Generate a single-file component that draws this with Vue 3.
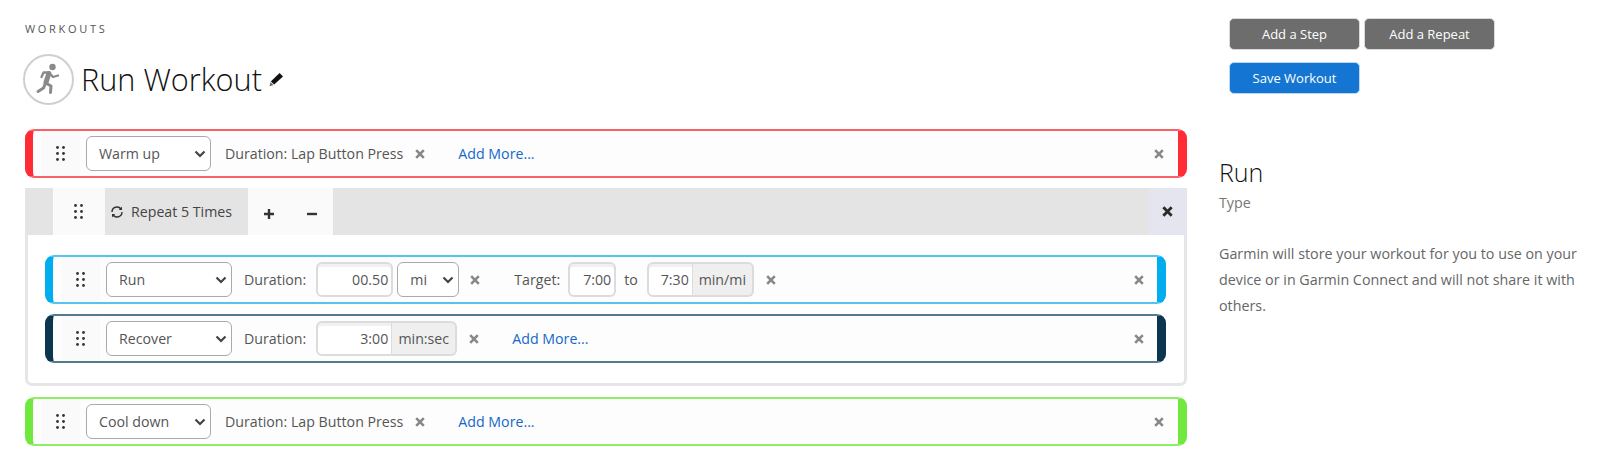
<script setup>
const dots = [[0, 0], [6, 0], [0, 6], [6, 6], [0, 12], [6, 12]]
</script>

<template>
  <div class="page">
    <main class="main">
      <div class="crumb">WORKOUTS</div>
      <div class="title-row">
        <div class="sport">
          <svg width="32" height="34" viewBox="0 0 32 34" fill="none" stroke="#8a8a8a" stroke-linecap="round" stroke-linejoin="round">
            <circle cx="19.5" cy="5" r="3.2" fill="#8a8a8a" stroke="none" />
            <path d="M15.8 11.5 L13 20.5" stroke-width="5" />
            <path d="M15 10.5 L10.5 10.5 L8.5 15" stroke-width="2.3" />
            <path d="M16 10.5 L20 15 L25 13.5" stroke-width="2.3" />
            <path d="M12.5 21 L18 24 L17.5 30.5" stroke-width="3" />
            <path d="M12.5 21 L10.5 26 L5 29.5" stroke-width="3" />
          </svg>
        </div>
        <h1 class="title">Run Workout</h1>
        <svg class="pencil" width="15" height="15" viewBox="0 0 15 15">
          <path d="M10.6 1 L14 4.4 L5.2 12.4 L1.8 9.4 Z" fill="#111" />
          <path d="M1.4 10.2 L4.5 13 L0.6 14.2 Z" fill="#666" />
        </svg>
      </div>

      <section class="step red">
        <div class="drag">
          <svg class="dots" width="10" height="16" viewBox="-1.5 -1.5 10 16"><circle v-for="d in dots" :key="d.join()" :cx="d[0]" :cy="d[1]" r="1.4" /></svg>
        </div>
        <label class="select s-first">
          <select><option>Warm up</option></select>
          <svg class="chev" width="12" height="8" viewBox="0 0 12 8"><path d="M1.5 1.5 L6 6 L10.5 1.5" /></svg>
        </label>
        <span class="text t-dur">Duration: Lap Button Press</span>
        <svg class="x x-a" width="10" height="10" viewBox="0 0 10 10"><path d="M1.2 1.2 L8.8 8.8 M8.8 1.2 L1.2 8.8" /></svg>
        <a class="more m-a">Add More...</a>
        <svg class="x x-end" width="10" height="10" viewBox="0 0 10 10"><path d="M1.2 1.2 L8.8 8.8 M8.8 1.2 L1.2 8.8" /></svg>
      </section>

      <section class="repeat">
        <header class="repeat-head">
          <div class="rh-drag">
            <svg class="dots" width="10" height="16" viewBox="-1.5 -1.5 10 16"><circle v-for="d in dots" :key="d.join()" :cx="d[0]" :cy="d[1]" r="1.4" /></svg>
          </div>
          <div class="rh-label">
            <svg width="14" height="14" viewBox="0 0 14 14" fill="none" stroke="#333" stroke-width="1.4">
              <path d="M2 7 A5 5 0 0 1 11 4" />
              <path d="M12 7 A5 5 0 0 1 3 10" />
              <path d="M12 1.6 L12 5 L8.8 5 Z" fill="#333" stroke="none" />
              <path d="M2 12.4 L2 9 L5.2 9 Z" fill="#333" stroke="none" />
            </svg>
            <span class="text">Repeat 5 Times</span>
          </div>
          <div class="rh-tools">
            <svg width="12" height="12" viewBox="0 0 12 12"><path d="M6 1 V11 M1 6 H11" stroke="#333" stroke-width="2.4" /></svg>
            <svg width="12" height="12" viewBox="0 0 12 12"><path d="M1 6 H11" stroke="#333" stroke-width="2.4" /></svg>
          </div>
          <div class="rh-fill"></div>
          <div class="rh-close">
            <svg width="11" height="11" viewBox="0 0 10 10"><path d="M1.2 1.2 L8.8 8.8 M8.8 1.2 L1.2 8.8" stroke="#2b2b2b" stroke-width="2.6" /></svg>
          </div>
        </header>

        <div class="repeat-body">
          <section class="step blue">
            <div class="drag">
              <svg class="dots" width="10" height="16" viewBox="-1.5 -1.5 10 16"><circle v-for="d in dots" :key="d.join()" :cx="d[0]" :cy="d[1]" r="1.4" /></svg>
            </div>
            <label class="select s-inner">
              <select><option>Run</option></select>
              <svg class="chev" width="12" height="8" viewBox="0 0 12 8"><path d="M1.5 1.5 L6 6 L10.5 1.5" /></svg>
            </label>
            <span class="text t-label">Duration:</span>
            <div class="input w-76">00.50</div>
            <label class="select s-unit">
              <select><option>mi</option></select>
              <svg class="chev" width="12" height="8" viewBox="0 0 12 8"><path d="M1.5 1.5 L6 6 L10.5 1.5" /></svg>
            </label>
            <svg class="x x-b" width="10" height="10" viewBox="0 0 10 10"><path d="M1.2 1.2 L8.8 8.8 M8.8 1.2 L1.2 8.8" /></svg>
            <span class="text t-target">Target:</span>
            <div class="input w-48">7:00</div>
            <span class="text t-to">to</span>
            <div class="group g-target">
              <div class="input in-group w-46">7:30</div>
              <span class="addon">min/mi</span>
            </div>
            <svg class="x x-c" width="10" height="10" viewBox="0 0 10 10"><path d="M1.2 1.2 L8.8 8.8 M8.8 1.2 L1.2 8.8" /></svg>
            <svg class="x x-end" width="10" height="10" viewBox="0 0 10 10"><path d="M1.2 1.2 L8.8 8.8 M8.8 1.2 L1.2 8.8" /></svg>
          </section>

          <section class="step navy">
            <div class="drag">
              <svg class="dots" width="10" height="16" viewBox="-1.5 -1.5 10 16"><circle v-for="d in dots" :key="d.join()" :cx="d[0]" :cy="d[1]" r="1.4" /></svg>
            </div>
            <label class="select s-inner">
              <select><option>Recover</option></select>
              <svg class="chev" width="12" height="8" viewBox="0 0 12 8"><path d="M1.5 1.5 L6 6 L10.5 1.5" /></svg>
            </label>
            <span class="text t-label">Duration:</span>
            <div class="group g-time">
              <div class="input in-group w-76g">3:00</div>
              <span class="addon">min:sec</span>
            </div>
            <svg class="x x-d" width="10" height="10" viewBox="0 0 10 10"><path d="M1.2 1.2 L8.8 8.8 M8.8 1.2 L1.2 8.8" /></svg>
            <a class="more m-b">Add More...</a>
            <svg class="x x-end" width="10" height="10" viewBox="0 0 10 10"><path d="M1.2 1.2 L8.8 8.8 M8.8 1.2 L1.2 8.8" /></svg>
          </section>
        </div>
      </section>

      <section class="step green">
        <div class="drag">
          <svg class="dots" width="10" height="16" viewBox="-1.5 -1.5 10 16"><circle v-for="d in dots" :key="d.join()" :cx="d[0]" :cy="d[1]" r="1.4" /></svg>
        </div>
        <label class="select s-first">
          <select><option>Cool down</option></select>
          <svg class="chev" width="12" height="8" viewBox="0 0 12 8"><path d="M1.5 1.5 L6 6 L10.5 1.5" /></svg>
        </label>
        <span class="text t-dur">Duration: Lap Button Press</span>
        <svg class="x x-a" width="10" height="10" viewBox="0 0 10 10"><path d="M1.2 1.2 L8.8 8.8 M8.8 1.2 L1.2 8.8" /></svg>
        <a class="more m-a">Add More...</a>
        <svg class="x x-end" width="10" height="10" viewBox="0 0 10 10"><path d="M1.2 1.2 L8.8 8.8 M8.8 1.2 L1.2 8.8" /></svg>
      </section>
    </main>

    <aside class="side">
      <div class="actions">
        <div class="btn-row">
          <button class="btn gray">Add a Step</button>
          <button class="btn gray">Add a Repeat</button>
        </div>
        <button class="btn blue-btn">Save Workout</button>
      </div>
      <h2 class="side-title">Run</h2>
      <div class="side-type">Type</div>
      <p class="side-copy">Garmin will store your workout for you to use on your device or in Garmin Connect and will not share it with others.</p>
    </aside>
  </div>
</template>

<style>
html, body { margin: 0; background: #fff; }
</style>

<style scoped>
.page {
  display: flex;
  width: 1600px;
  height: 464px;
  overflow: hidden;
  padding-left: 25px;
  box-sizing: border-box;
  font-family: "Open Sans", sans-serif;
  font-size: 14.2px;
  color: #555;
  background: #fff;
}
.main { width: 1162px; flex: none; padding-top: 20px; }
.crumb { font-size: 11px; line-height: 18px; letter-spacing: 2.7px; color: #555; }
.title-row { display: flex; align-items: center; margin-top: 16px; height: 50px; margin-left: -2px; }
.sport {
  width: 51px; height: 51px; box-sizing: border-box; flex: none;
  border: 2.5px solid #cfcfcf; border-radius: 50%;
  display: flex; align-items: center; justify-content: center;
}
.title { margin: 0 0 0 7px; font-size: 30.7px; font-weight: 300; line-height: 44px; color: #111; }
.pencil { margin-left: 7px; }

.step {
  display: flex; align-items: center; position: relative;
  height: 49px; box-sizing: border-box;
  background: #fdfdfd;
  border: 2px solid; border-left-width: 8px; border-right-width: 9px;
  border-radius: 9px;
}
.main > .step:first-of-type { margin-top: 25px; }
.red { border-color: #fb5f68; border-left-color: #ff2b35; border-right-color: #ff2b35; }
.green { border-color: #8eee66; border-left-color: #70e83e; border-right-color: #70e83e; margin-top: 11px; }
.blue { border-color: #55c4f1; border-left-color: #00aeef; border-right-color: #00aeef; }
.navy { border-color: #557a90; border-left-color: #0c3550; border-right-color: #0c3550; margin-top: 10px; }

.drag {
  align-self: stretch; width: 39px; margin-left: 8px; flex: none; background: #fafafa;
  display: flex; align-items: center; justify-content: center;
}
.dots { fill: #333; }
.select { position: relative; display: block; flex: none; height: 35px; }
.select select {
  appearance: none; width: 100%; height: 100%; box-sizing: border-box;
  border: 1.5px solid #aaa; border-radius: 6px; background: #fff;
  font: 14.2px "Open Sans", sans-serif; color: #555; padding: 0 0 0 12px; margin: 0;
}
.chev { position: absolute; right: 5px; top: 14px; fill: none; stroke: #444; stroke-width: 2.2; }
.s-first { width: 125px; margin-left: 6px; }
.s-inner { width: 126px; margin-left: 6px; }
.s-unit { width: 62px; margin-left: 4px; }
.s-unit select { padding-left: 12px; }

.text { white-space: nowrap; color: #555; line-height: 20px; }
.t-dur { margin-left: 14px; }
.t-label { margin-left: 12px; }
.t-target { margin-left: 34px; }
.t-to { margin-left: 8px; }

.input {
  height: 35px; box-sizing: border-box; flex: none;
  border: 2px solid #dcdcdc; border-radius: 6px; background: #fff;
  box-shadow: inset 0 3px 0 #f1f1f1;
  text-align: right; padding: 0 3px 0 0; line-height: 32px; color: #555;
}
.w-76 { width: 77px; margin-left: 10px; }
.w-48 { width: 48px; margin-left: 8px; }
.group { display: flex; flex: none; height: 35px; border-radius: 6px; }
.g-target { width: 107px; margin-left: 9px; }
.g-time { width: 141px; margin-left: 10px; }
.in-group { border-radius: 6px 0 0 6px; border-right-width: 1px; }
.w-46 { width: 46px; }
.w-76g { width: 76px; }
.addon {
  flex: 1; box-sizing: border-box; height: 35px; line-height: 31px; text-align: center;
  border: 2px solid #dcdcdc; border-left: 0; border-radius: 0 6px 6px 0;
  background: #efefef; color: #555;
}

.x { flex: none; fill: none; stroke: #888; stroke-width: 2.6; }
.x-a { margin-left: 12px; }
.x-b { margin-left: 11px; }
.x-c { margin-left: 12px; }
.x-d { margin-left: 12px; }
.x-end { margin-left: auto; margin-right: 14px; }
.repeat-body .x-end { margin-right: 13px; }
.more { color: #1468c9; white-space: nowrap; }
.m-a { margin-left: 33px; }
.m-b { margin-left: 33px; }

.repeat {
  margin-top: 10px;
  border: 3px solid #e6e6e8; border-top: 0; border-radius: 0 0 7px 7px;
}
.repeat-head {
  display: flex; height: 47px; margin: 0 -3px; background: #e4e4e4;
}
.rh-drag { width: 52px; margin-left: 28px; background: #fafafa; display: flex; align-items: center; justify-content: center; }
.rh-label { width: 143px; display: flex; align-items: center; gap: 7px; padding-left: 5px; box-sizing: border-box; }
.rh-label .text { color: #444; }
.rh-tools { width: 85px; background: #fafafa; display: flex; align-items: center; justify-content: center; gap: 31px; padding: 4px 0 0; box-sizing: border-box; }
.rh-fill { flex: 1; }
.rh-close { width: 39px; background: #e4e5ee; display: flex; align-items: center; justify-content: center; }
.repeat-body { padding: 20px 18px 20px 17px; }

.side { width: 380px; margin-left: 32px; flex: none; }
.actions { margin-left: 10px; padding-top: 18px; }
.btn-row { display: flex; gap: 4px; }
.btn {
  display: block; width: 131px; height: 32px; box-sizing: border-box; padding: 0;
  border: 1px solid #d9d9d9; border-radius: 5px;
  font: 13px "Open Sans", sans-serif; color: #fff;
}
.gray { background: #6d6d6d; }
.blue-btn { background: #1476d2; border-color: #bcd8f2; margin-top: 12px; }
.side-title { margin: 61px 0 0; font-size: 25px; font-weight: 300; line-height: 34px; color: #111; }
.side-type { font-size: 14.3px; line-height: 20px; color: #777; margin-top: 4px; }
.side-copy { margin: 28px 0 0; width: 364px; font-size: 14.3px; line-height: 26px; color: #666; }
</style>
